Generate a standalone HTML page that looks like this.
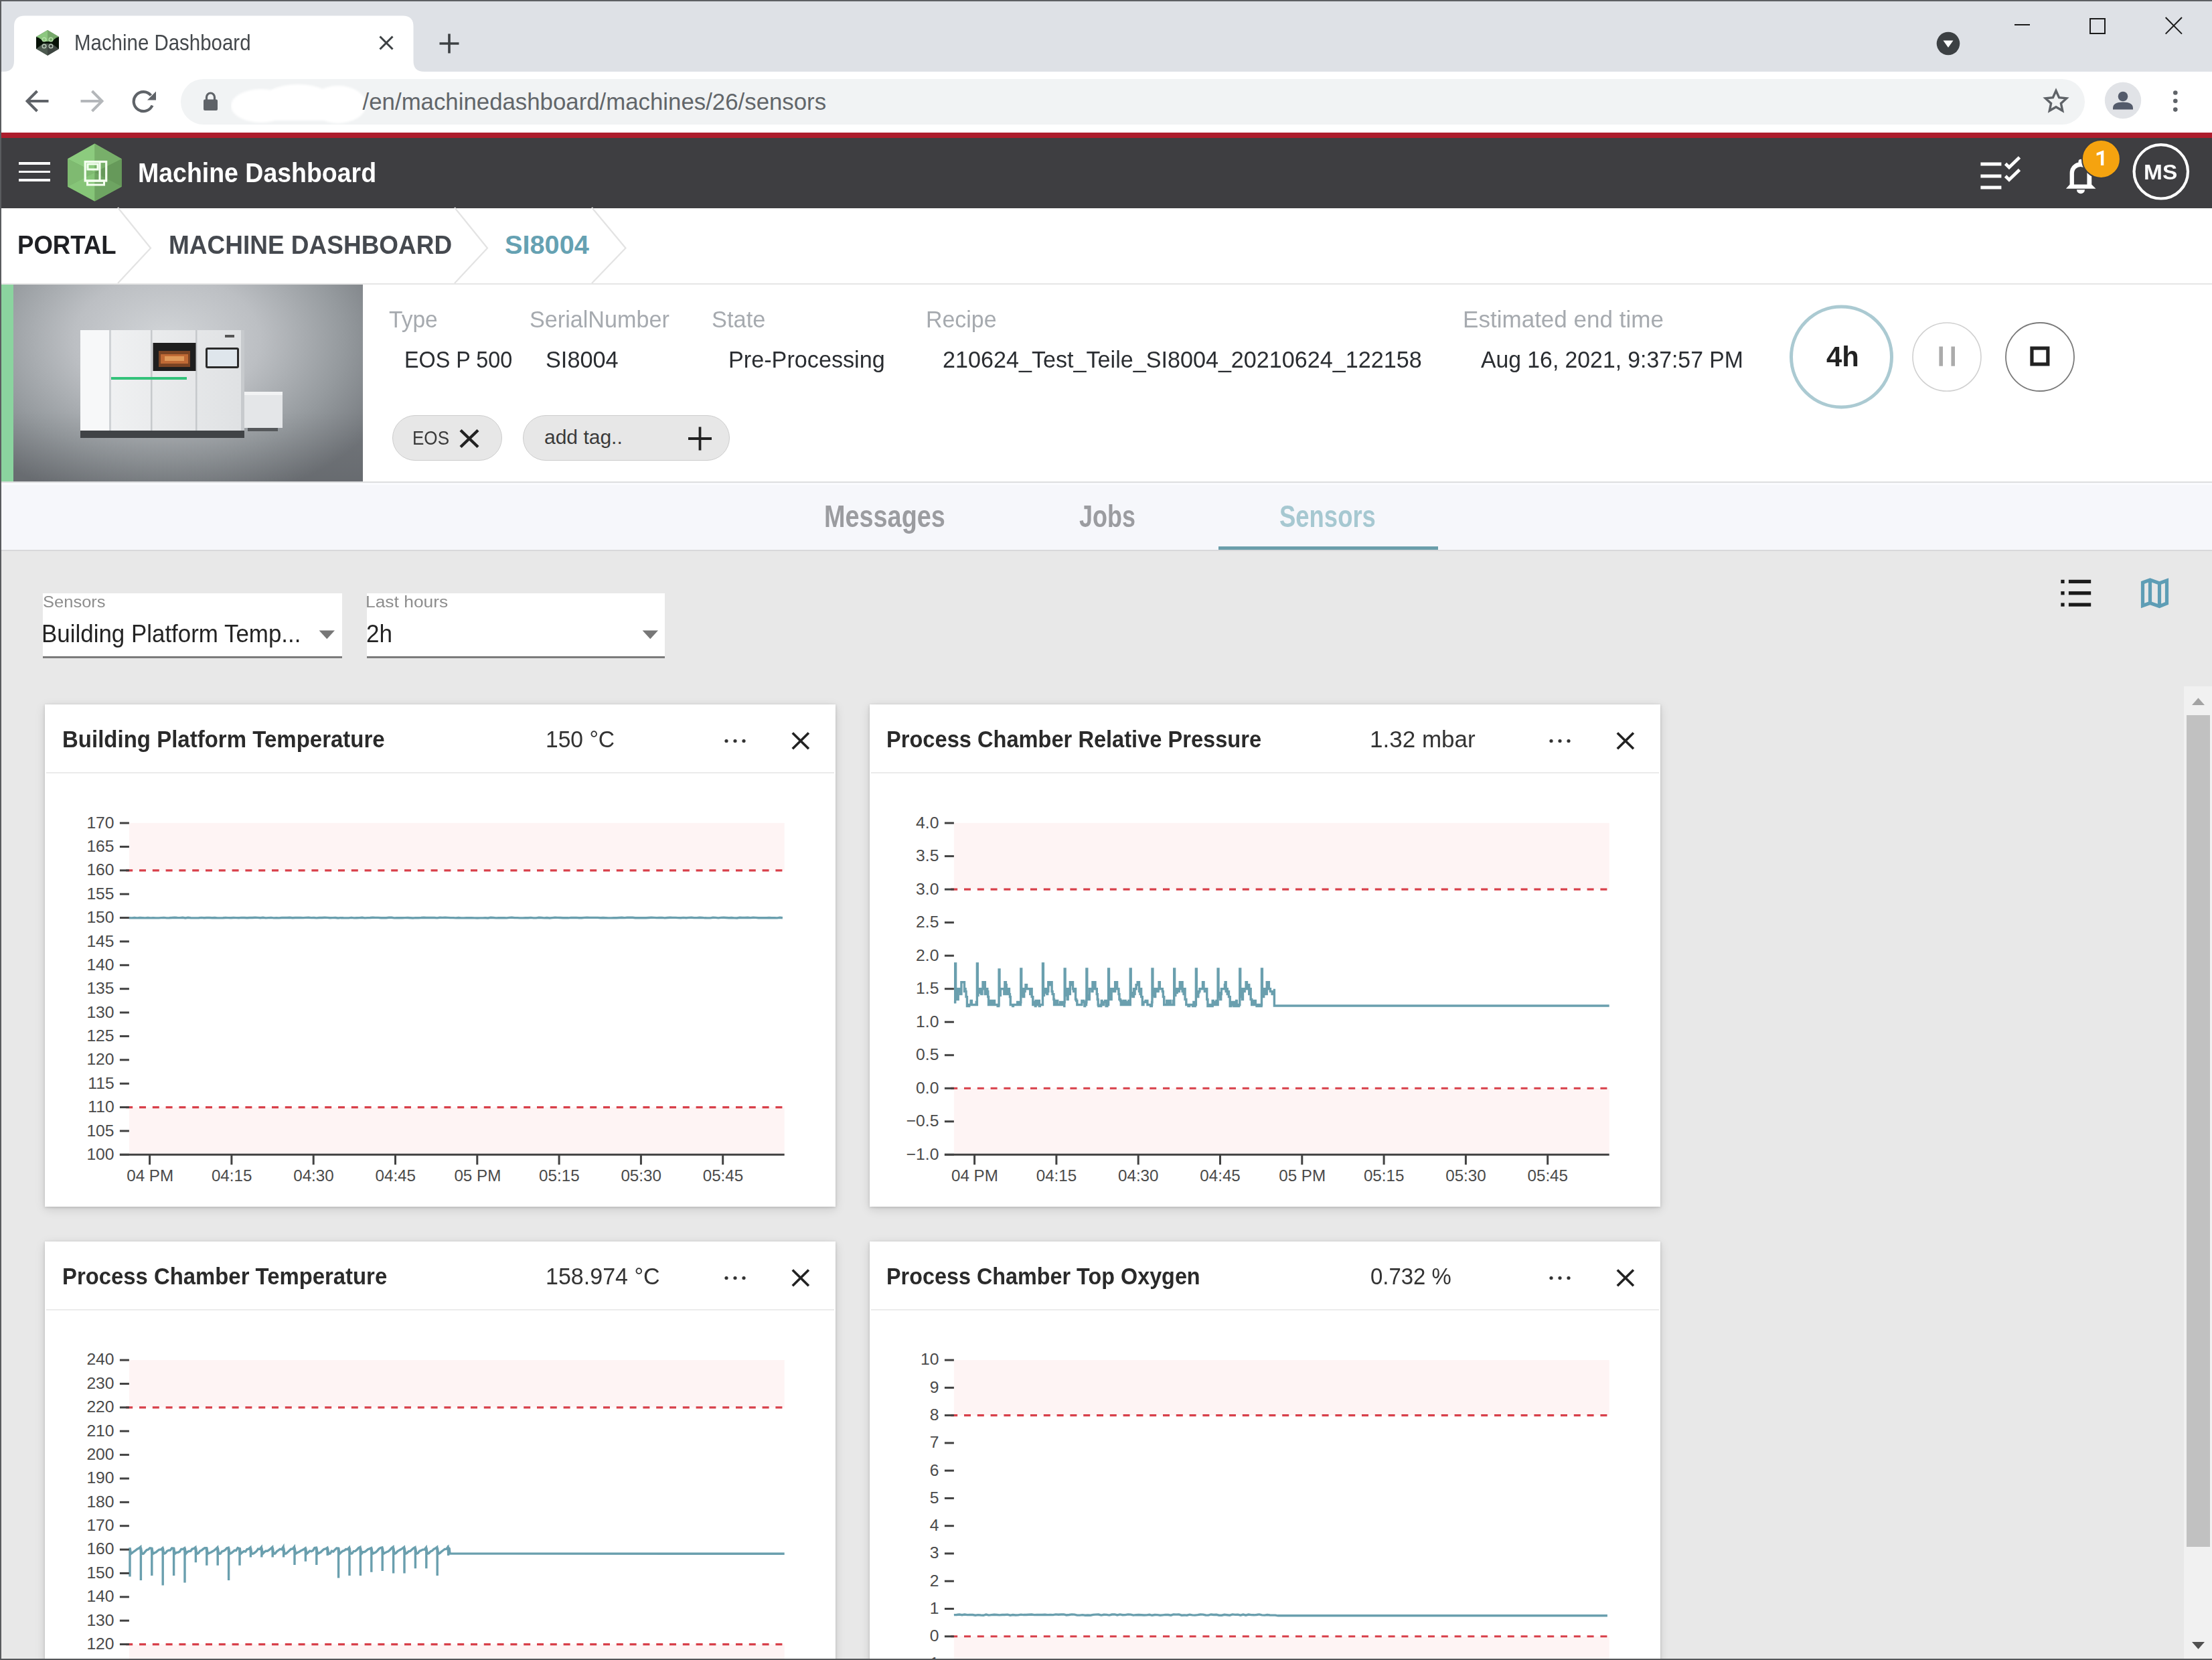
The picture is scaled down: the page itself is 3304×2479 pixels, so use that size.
<!DOCTYPE html><html><head><meta charset="utf-8"><title>Machine Dashboard</title><style>html,body{margin:0;padding:0;width:3304px;height:2479px;overflow:hidden;background:#e8e8e8;font-family:"Liberation Sans",sans-serif}</style></head><body><div style="position:absolute;left:0.0px;top:0.0px;width:3304.0px;height:2479.0px;background:#e8e8e8"></div>
<div style="position:absolute;left:0.0px;top:0.0px;width:3304.0px;height:107.0px;background:#dee1e6"></div>
<div style="position:absolute;left:0.0px;top:0.0px;width:3304.0px;height:2.0px;background:#5d5f63"></div>
<svg style="position:absolute;left:0.0px;top:0.0px;" width="660.0" height="107.0" viewBox="0 0 660 107"><path d="M5 107 Q21 107 21 91 L21 39.5 Q21 23.5 37 23.5 L601.5 23.5 Q617.5 23.5 617.5 39.5 L617.5 91 Q617.5 107 633.5 107 Z" fill="#ffffff"/></svg>
<svg style="position:absolute;left:53.0px;top:44.0px;" width="36.0" height="40.0" viewBox="0 0 36 40">
<polygon points="18,1 35,11 35,29 18,39 1,29 1,11" fill="#4d5a4f"/>
<polygon points="18,1 35,11 35,20 1,20 1,11" fill="#8cc77f"/>
<polygon points="18,1 18,20 35,20 35,11" fill="#77a86b"/>
<polygon points="18,39 35,29 35,20 18,20" fill="#3d4540"/>
<path d="M1 11 Q8 13 13 20 L1 29 Z" fill="#071207"/>
<path d="M35 11 Q28 13 23 20 L35 29 Z" fill="#071207"/>
<rect x="9" y="18" width="18" height="3" fill="#0a160a"/>
<circle cx="13" cy="15" r="2.8" fill="none" stroke="#b5e0a8" stroke-width="1.4"/>
<circle cx="23" cy="15" r="2.8" fill="none" stroke="#b5e0a8" stroke-width="1.4"/>
<circle cx="13" cy="25" r="2.8" fill="none" stroke="#b8c8b8" stroke-width="1.4"/>
<circle cx="23" cy="25" r="2.8" fill="none" stroke="#b8c8b8" stroke-width="1.4"/>
</svg>
<div style="position:absolute;left:110.5px;top:47.1px;font:400 33px/33px 'Liberation Sans', sans-serif;color:#44484c;white-space:nowrap;transform:scaleX(0.8922);transform-origin:0 0;">Machine Dashboard</div>
<svg style="position:absolute;left:565.0px;top:52.0px;" width="24.0" height="24.0" viewBox="0 0 24 24"><path d="M2.5 2.5 L21.5 21.5 M21.5 2.5 L2.5 21.5" stroke="#3c4043" stroke-width="3"/></svg>
<svg style="position:absolute;left:655.0px;top:49.0px;" width="32.0" height="32.0" viewBox="0 0 32 32"><path d="M16 1.5 V30.5 M1.5 16 H30.5" stroke="#3c4043" stroke-width="3.6"/></svg>
<svg style="position:absolute;left:2892.0px;top:47.0px;" width="36.0" height="36.0" viewBox="0 0 36 36"><circle cx="18" cy="18" r="17.3" fill="#3c4043"/><path d="M10.5 13.5 H25.5 L18 24 Z" fill="#fff"/></svg>
<div style="position:absolute;left:3008.5px;top:35.5px;width:23.5px;height:2.0px;background:#1b1b1b"></div>
<div style="position:absolute;left:3120.8px;top:27.0px;width:24.2px;height:23.6px;border:2.2px solid #1b1b1b;box-sizing:border-box"></div>
<svg style="position:absolute;left:3233.0px;top:25.0px;" width="28.0" height="28.0" viewBox="0 0 28 28"><path d="M1.7 1 L26 25.6 M26 1 L1.7 25.6" stroke="#1b1b1b" stroke-width="2"/></svg>
<div style="position:absolute;left:0.0px;top:107.0px;width:3304.0px;height:91.0px;background:#ffffff"></div>
<svg style="position:absolute;left:38.0px;top:133.0px;" width="38.0" height="36.0" viewBox="0 0 38 36"><path d="M2.5 18 H34.5 M17.5 3 L2.5 18 L17.5 33" fill="none" stroke="#5f6368" stroke-width="4"/></svg>
<svg style="position:absolute;left:117.0px;top:133.0px;" width="38.0" height="36.0" viewBox="0 0 38 36"><path d="M35.5 18 H3.5 M20.5 3 L35.5 18 L20.5 33" fill="none" stroke="#b4b7ba" stroke-width="4"/></svg>
<svg style="position:absolute;left:197.0px;top:133.0px;" width="40.0" height="38.0" viewBox="0 0 40 38"><path d="M30.5 24.5 A14.5 14.5 0 1 1 28.5 9.5" fill="none" stroke="#5f6368" stroke-width="4.2"/><path d="M36 3.5 V16.5 H23 Z" fill="#5f6368"/></svg>
<div style="position:absolute;left:270.0px;top:117.5px;width:2844.4px;height:68.5px;background:#f1f3f4;border-radius:34.25px"></div>
<svg style="position:absolute;left:302.0px;top:136.0px;" width="25.0" height="31.0" viewBox="0 0 25 31"><path d="M6.5 13 V9 A6 6 0 0 1 18.5 9 V13" fill="none" stroke="#5f6368" stroke-width="3.2"/><rect x="2" y="12.5" width="21" height="16.5" rx="2" fill="#5f6368"/></svg>
<svg style="position:absolute;left:345.0px;top:120.0px;" width="205.0" height="68.0" viewBox="0 0 205 68"><g fill="#ffffff" filter="url(#bl)"><ellipse cx="45" cy="38" rx="45" ry="25"/><ellipse cx="100" cy="32" rx="55" ry="26"/><ellipse cx="160" cy="36" rx="42" ry="28"/><rect x="20" y="20" width="160" height="40" rx="18"/></g><defs><filter id="bl"><feGaussianBlur stdDeviation="1.5"/></filter></defs></svg>
<div style="position:absolute;left:541.6px;top:135.0px;font:400 34.8px/34.8px 'Liberation Sans', sans-serif;color:#62666a;white-space:nowrap;">/en/machinedashboard/machines/26/sensors</div>
<svg style="position:absolute;left:3051.0px;top:131.0px;" width="40.0" height="40.0" viewBox="0 0 40 40"><path d="M20 4.5 L24.6 14.7 L35.7 15.9 L27.4 23.4 L29.7 34.3 L20 28.8 L10.3 34.3 L12.6 23.4 L4.3 15.9 L15.4 14.7 Z" fill="none" stroke="#5f6368" stroke-width="3.4" stroke-linejoin="miter"/></svg>
<svg style="position:absolute;left:3143.0px;top:122.0px;" width="56.0" height="56.0" viewBox="0 0 56 56"><circle cx="28" cy="28" r="27.2" fill="#e1e3e7"/><circle cx="28" cy="22" r="7.3" fill="#545b6b"/><path d="M13 39.5 Q13 30.5 28 30.5 Q43 30.5 43 39.5 V41.5 H13 Z" fill="#545b6b"/></svg>
<svg style="position:absolute;left:3243.0px;top:132.0px;" width="13.0" height="38.0" viewBox="0 0 13 38"><circle cx="6.3" cy="6.5" r="3.3" fill="#5f6368"/><circle cx="6.3" cy="18.8" r="3.3" fill="#5f6368"/><circle cx="6.3" cy="31.6" r="3.3" fill="#5f6368"/></svg>
<div style="position:absolute;left:0.0px;top:197.5px;width:3304.0px;height:8.0px;background:#ad1c2c"></div>
<div style="position:absolute;left:0.0px;top:205.5px;width:3304.0px;height:105.3px;background:#3e3e41"></div>
<div style="position:absolute;left:28.0px;top:242.2px;width:46.6px;height:3.6px;background:#ffffff"></div>
<div style="position:absolute;left:28.0px;top:254.7px;width:46.6px;height:3.6px;background:#ffffff"></div>
<div style="position:absolute;left:28.0px;top:267.2px;width:46.6px;height:3.6px;background:#ffffff"></div>
<svg style="position:absolute;left:99.0px;top:213.0px;" width="85.0" height="90.0" viewBox="0 0 85 90">
<polygon points="42.5,1.5 82.7,24.3 82.7,65.7 42.5,87.5 2,65.7 2,24.3" fill="#72ab64"/>
<polygon points="42.5,1.5 2,24.3 42.5,44.5" fill="#8ccb7e"/>
<polygon points="42.5,1.5 82.7,24.3 42.5,44.5" fill="#78af6a"/>
<polygon points="2,24.3 2,65.7 42.5,44.5" fill="#7fba71"/>
<polygon points="82.7,24.3 82.7,65.7 42.5,44.5" fill="#66995a"/>
<polygon points="2,65.7 42.5,87.5 42.5,44.5" fill="#86c578"/>
<polygon points="82.7,65.7 42.5,87.5 42.5,44.5" fill="#6ea462"/>
<rect x="28.2" y="28.5" width="31.5" height="28.5" fill="none" stroke="#f4fff0" stroke-width="3.2"/>
<rect x="32" y="32" width="15" height="8" fill="none" stroke="#f4fff0" stroke-width="3"/>
<line x1="50" y1="28.5" x2="50" y2="57" stroke="#f4fff0" stroke-width="3"/>
<rect x="31.5" y="57" width="25" height="6" fill="none" stroke="#f4fff0" stroke-width="3"/>
</svg>
<div style="position:absolute;left:205.7px;top:237.5px;font:700 40.7px/40.7px 'Liberation Sans', sans-serif;color:#ffffff;white-space:nowrap;transform:scaleX(0.9209);transform-origin:0 0;">Machine Dashboard</div>
<svg style="position:absolute;left:2955.0px;top:230.0px;" width="66.0" height="56.0" viewBox="0 0 66 56">
<rect x="3.4" y="12.5" width="31" height="5" fill="#fff"/>
<rect x="3.4" y="30.5" width="31" height="5" fill="#fff"/>
<rect x="3.4" y="47.5" width="31" height="5" fill="#fff"/>
<path d="M40.5 14.5 L46 20 L61.5 5" fill="none" stroke="#fff" stroke-width="4.8"/>
<path d="M40.5 33 L46 38.5 L61.5 23.5" fill="none" stroke="#fff" stroke-width="4.8"/>
</svg>
<svg style="position:absolute;left:3083.0px;top:232.0px;" width="52.0" height="62.0" viewBox="0 0 52 62">
<path fill-rule="evenodd" fill="#fff" d="M2.9 49.7 L8.6 43.4 V26.3 A16.3 16.3 0 0 1 21.5 10.4 V9.3 A3.5 3.5 0 0 1 28.5 9.3 V10.4 A16.3 16.3 0 0 1 41.2 26.3 V43.4 L47.5 49.7 Z M14.9 43.4 V26.7 A9.75 9.75 0 0 1 34.4 26.7 V43.4 Z"/>
<path d="M19 51.2 A6 6 0 0 0 31 51.2 Z" fill="#fff"/>
</svg>
<svg style="position:absolute;left:3108.0px;top:207.0px;" width="62.0" height="62.0" viewBox="0 0 62 62"><circle cx="30.4" cy="30.4" r="28.5" fill="#f5a30f" stroke="#3c3d40" stroke-width="2"/></svg>
<svg style="position:absolute;left:3128.0px;top:222.0px;" width="20.0" height="26.0" viewBox="0 0 20 26"><path d="M14.3 2.7 V25.1 H9.9 V8.4 L3.6 10.4 V6.6 L13.3 2.7 Z" fill="#ffffff"/></svg>
<svg style="position:absolute;left:3183.0px;top:212.0px;" width="90.0" height="90.0" viewBox="0 0 90 90"><circle cx="44.8" cy="44.3" r="40.2" fill="none" stroke="#fff" stroke-width="4.2"/></svg>
<div style="position:absolute;left:3202.2px;top:242.3px;font:700 31.5px/31.5px 'Liberation Sans', sans-serif;color:#ffffff;white-space:nowrap;transform:scaleX(1.0624);transform-origin:0 0;">MS</div>
<div style="position:absolute;left:0.0px;top:310.8px;width:3304.0px;height:113.2px;background:#ffffff"></div>
<div style="position:absolute;left:0.0px;top:423.0px;width:3304.0px;height:1.5px;background:#e6e6e6"></div>
<div style="position:absolute;left:26.2px;top:346.4px;font:700 39.7px/39.7px 'Liberation Sans', sans-serif;color:#1f2024;white-space:nowrap;transform:scaleX(0.9218);transform-origin:0 0;">PORTAL</div>
<svg style="position:absolute;left:174.0px;top:309.0px;" width="55.0" height="116.0" viewBox="0 0 55 116"><path d="M2 1 L51 61.5 L2 114" fill="none" stroke="#e3e3e3" stroke-width="2.2"/></svg>
<svg style="position:absolute;left:677.0px;top:309.0px;" width="55.0" height="116.0" viewBox="0 0 55 116"><path d="M2 1 L51 61.5 L2 114" fill="none" stroke="#e3e3e3" stroke-width="2.2"/></svg>
<svg style="position:absolute;left:881.5px;top:309.0px;" width="56.5" height="116.0" viewBox="0 0 56.5 116"><path d="M2 1 L52.5 61.5 L2 114" fill="none" stroke="#e3e3e3" stroke-width="2.2"/></svg>
<div style="position:absolute;left:252.1px;top:346.0px;font:700 39.7px/39.7px 'Liberation Sans', sans-serif;color:#45494f;white-space:nowrap;transform:scaleX(0.9318);transform-origin:0 0;">MACHINE DASHBOARD</div>
<div style="position:absolute;left:754.0px;top:346.0px;font:700 39.7px/39.7px 'Liberation Sans', sans-serif;color:#65a1b2;white-space:nowrap;">SI8004</div>
<div style="position:absolute;left:0.0px;top:424.5px;width:3304.0px;height:294.5px;background:#ffffff"></div>
<div style="position:absolute;left:0.0px;top:719.0px;width:3304.0px;height:1.8px;background:#dedfe0"></div>
<div style="position:absolute;left:2.0px;top:425.0px;width:17.5px;height:293.5px;background:#8bd49f"></div>
<div style="position:absolute;left:19.5px;top:425px;width:522.5px;height:293.5px;overflow:hidden;
background:radial-gradient(ellipse 70% 85% at 44% 28%, #d2d5d8 0%, #bcbfc3 38%, #959a9e 72%, #73777c 100%);"></div>
<svg style="position:absolute;left:19.5px;top:425.0px;" width="522.5" height="293.5" viewBox="0 0 522.5 293.5">
<defs>
<linearGradient id="fl" x1="0" y1="0" x2="0" y2="1"><stop offset="0" stop-color="#000" stop-opacity="0"/><stop offset="1" stop-color="#000" stop-opacity="0.10"/></linearGradient>
<linearGradient id="wh" x1="0" y1="0" x2="1" y2="0"><stop offset="0" stop-color="#f3f4f5"/><stop offset="1" stop-color="#dfe1e3"/></linearGradient>
</defs>
<rect x="0" y="190" width="522.5" height="103.5" fill="url(#fl)"/>

<rect x="100" y="68" width="245" height="151" fill="url(#wh)"/>
<rect x="100" y="68" width="45" height="151" fill="#f7f8f9"/>
<rect x="143" y="68" width="3" height="151" fill="#cfd2d5"/>
<rect x="205" y="68" width="2.5" height="151" fill="#c6c9cc"/>
<rect x="272" y="68" width="2.5" height="151" fill="#c6c9cc"/>
<rect x="340" y="68" width="5" height="151" fill="#c7cacd"/>
<rect x="208.5" y="87" width="64" height="42" fill="#1e1e1e"/>
<rect x="217" y="99" width="47" height="24" fill="#7a4424"/>
<rect x="220" y="104" width="41" height="14" fill="#c06a35"/>
<rect x="226" y="107" width="29" height="7" fill="#e09a5a"/>
<rect x="287" y="94" width="50" height="31" rx="3" fill="#2a2a2a"/>
<rect x="290" y="97" width="44" height="25" fill="#dfe6ec"/>
<rect x="146" y="138" width="113" height="4" fill="#33c27a"/>
<rect x="100" y="218" width="245" height="11" fill="#404346"/>
<rect x="345" y="160" width="57" height="54" fill="#e4e6e8"/>
<rect x="345" y="160" width="57" height="5" fill="#f2f3f4"/>
<rect x="350" y="214" width="45" height="5" fill="#55585b"/>
<rect x="316" y="75" width="14" height="4" fill="#555"/>
</svg>
<div style="position:absolute;left:580.8px;top:460.4px;font:400 35.6px/35.6px 'Liberation Sans', sans-serif;color:#a6aaaf;white-space:nowrap;transform:scaleX(0.9431);transform-origin:0 0;">Type</div>
<div style="position:absolute;left:791.0px;top:460.4px;font:400 35.6px/35.6px 'Liberation Sans', sans-serif;color:#a6aaaf;white-space:nowrap;transform:scaleX(0.9601);transform-origin:0 0;">SerialNumber</div>
<div style="position:absolute;left:1063.0px;top:460.4px;font:400 35.6px/35.6px 'Liberation Sans', sans-serif;color:#a6aaaf;white-space:nowrap;transform:scaleX(0.9669);transform-origin:0 0;">State</div>
<div style="position:absolute;left:1382.7px;top:460.4px;font:400 35.6px/35.6px 'Liberation Sans', sans-serif;color:#a6aaaf;white-space:nowrap;transform:scaleX(0.9531);transform-origin:0 0;">Recipe</div>
<div style="position:absolute;left:2184.5px;top:460.4px;font:400 35.6px/35.6px 'Liberation Sans', sans-serif;color:#a6aaaf;white-space:nowrap;transform:scaleX(0.9853);transform-origin:0 0;">Estimated end time</div>
<div style="position:absolute;left:603.5px;top:520.1px;font:400 35.5px/35.5px 'Liberation Sans', sans-serif;color:#2a2d31;white-space:nowrap;transform:scaleX(0.9116);transform-origin:0 0;">EOS P 500</div>
<div style="position:absolute;left:815.0px;top:520.1px;font:400 35.5px/35.5px 'Liberation Sans', sans-serif;color:#2a2d31;white-space:nowrap;transform:scaleX(0.9660);transform-origin:0 0;">SI8004</div>
<div style="position:absolute;left:1087.5px;top:520.1px;font:400 35.5px/35.5px 'Liberation Sans', sans-serif;color:#2a2d31;white-space:nowrap;transform:scaleX(0.9630);transform-origin:0 0;">Pre-Processing</div>
<div style="position:absolute;left:1408.0px;top:520.1px;font:400 35.5px/35.5px 'Liberation Sans', sans-serif;color:#2a2d31;white-space:nowrap;transform:scaleX(0.9616);transform-origin:0 0;">210624_Test_Teile_SI8004_20210624_122158</div>
<div style="position:absolute;left:2211.6px;top:520.1px;font:400 35.5px/35.5px 'Liberation Sans', sans-serif;color:#2a2d31;white-space:nowrap;transform:scaleX(0.9499);transform-origin:0 0;">Aug 16, 2021, 9:37:57 PM</div>
<div style="position:absolute;left:585.5px;top:620.0px;width:164.5px;height:68.0px;background:#e7e7e7;border:1.5px solid #cdcdcd;border-radius:34px;box-sizing:border-box"></div>
<div style="position:absolute;left:616.1px;top:638.6px;font:400 30px/30px 'Liberation Sans', sans-serif;color:#3a3a3a;white-space:nowrap;transform:scaleX(0.8683);transform-origin:0 0;">EOS</div>
<svg style="position:absolute;left:685.0px;top:640.0px;" width="32.0" height="30.0" viewBox="0 0 32 30"><path d="M3 2.5 L29 27.5 M29 2.5 L3 27.5" stroke="#222" stroke-width="4.4"/></svg>
<div style="position:absolute;left:781.0px;top:620.0px;width:309.0px;height:68.0px;background:#e7e7e7;border:1.5px solid #cdcdcd;border-radius:34px;box-sizing:border-box"></div>
<div style="position:absolute;left:813.0px;top:637.6px;font:400 30px/30px 'Liberation Sans', sans-serif;color:#3a3a3a;white-space:nowrap;">add tag..</div>
<svg style="position:absolute;left:1026.0px;top:636.0px;" width="39.0" height="38.0" viewBox="0 0 39 38"><path d="M19.5 1.5 V36.5 M2 19 H37" stroke="#222" stroke-width="3.8"/></svg>
<svg style="position:absolute;left:2670.0px;top:453.0px;" width="162.0" height="162.0" viewBox="0 0 162 162"><circle cx="80.5" cy="80" r="75" fill="none" stroke="#abcad2" stroke-width="5"/></svg>
<div style="position:absolute;left:2727.5px;top:512.1px;font:700 42.2px/42.2px 'Liberation Sans', sans-serif;color:#222;white-space:nowrap;transform:scaleX(0.9903);transform-origin:0 0;">4h</div>
<svg style="position:absolute;left:2854.0px;top:479.0px;" width="108.0" height="108.0" viewBox="0 0 108 108"><circle cx="54" cy="54" r="51" fill="none" stroke="#d0d0d0" stroke-width="1.6"/><rect x="42.4" y="38.5" width="5.6" height="29.2" fill="#ababab"/><rect x="60.4" y="38.5" width="5.6" height="29.2" fill="#ababab"/></svg>
<svg style="position:absolute;left:2993.0px;top:479.0px;" width="108.0" height="108.0" viewBox="0 0 108 108"><circle cx="54" cy="54" r="51" fill="none" stroke="#7a7a7a" stroke-width="1.8"/><rect x="41.95" y="41" width="23.9" height="23.9" fill="none" stroke="#222" stroke-width="5.2"/></svg>
<div style="position:absolute;left:0.0px;top:720.5px;width:3304.0px;height:101.0px;background:#f6f7fb"></div>
<div style="position:absolute;left:0.0px;top:721.8px;width:3304.0px;height:2.4px;background:#fbfcfe"></div>
<div style="position:absolute;left:0.0px;top:821.0px;width:3304.0px;height:1.8px;background:#d8d8da"></div>
<div style="position:absolute;left:1231.1px;top:747.2px;font:700 47px/47px 'Liberation Sans', sans-serif;color:#9b9ca0;white-space:nowrap;transform:scaleX(0.8048);transform-origin:0 0;">Messages</div>
<div style="position:absolute;left:1611.5px;top:747.2px;font:700 47px/47px 'Liberation Sans', sans-serif;color:#9b9ca0;white-space:nowrap;transform:scaleX(0.7646);transform-origin:0 0;">Jobs</div>
<div style="position:absolute;left:1911.0px;top:747.2px;font:700 47px/47px 'Liberation Sans', sans-serif;color:#a6c8d1;white-space:nowrap;transform:scaleX(0.7756);transform-origin:0 0;">Sensors</div>
<div style="position:absolute;left:1819.8px;top:816.0px;width:328.7px;height:5.2px;background:#6b9eab"></div>
<div style="position:absolute;left:64.0px;top:886.2px;width:446.6px;height:94.0px;background:#ffffff"></div>
<div style="position:absolute;left:64.0px;top:979.8px;width:446.6px;height:3.6px;background:#7b7b7b"></div>
<div style="position:absolute;left:64.3px;top:886.6px;font:400 24.7px/24.7px 'Liberation Sans', sans-serif;color:#8d8d8d;white-space:nowrap;transform:scaleX(1.0334);transform-origin:0 0;">Sensors</div>
<div style="position:absolute;left:62.2px;top:928.4px;font:400 37.8px/37.8px 'Liberation Sans', sans-serif;color:#232323;white-space:nowrap;transform:scaleX(0.9237);transform-origin:0 0;">Building Platform Temp...</div>
<svg style="position:absolute;left:476.0px;top:941.0px;" width="25.0" height="14.0" viewBox="0 0 25 14"><path d="M0.6 0.5 H24 L12.3 13.2 Z" fill="#777"/></svg>
<div style="position:absolute;left:547.6px;top:886.2px;width:445.4px;height:94.0px;background:#ffffff"></div>
<div style="position:absolute;left:547.6px;top:979.8px;width:445.4px;height:3.6px;background:#7b7b7b"></div>
<div style="position:absolute;left:545.5px;top:886.6px;font:400 24.7px/24.7px 'Liberation Sans', sans-serif;color:#8d8d8d;white-space:nowrap;transform:scaleX(1.0688);transform-origin:0 0;">Last hours</div>
<div style="position:absolute;left:546.7px;top:928.4px;font:400 37.8px/37.8px 'Liberation Sans', sans-serif;color:#232323;white-space:nowrap;transform:scaleX(0.9277);transform-origin:0 0;">2h</div>
<svg style="position:absolute;left:958.5px;top:941.0px;" width="25.0" height="14.0" viewBox="0 0 25 14"><path d="M0.6 0.5 H24 L12.3 13.2 Z" fill="#777"/></svg>
<svg style="position:absolute;left:3074.0px;top:860.0px;" width="54.0" height="50.0" viewBox="0 0 54 50">
<rect x="4.3" y="5.8" width="5.3" height="5.3" fill="#1a1a1a"/><rect x="15.9" y="5.8" width="33.3" height="5.3" fill="#1a1a1a"/>
<rect x="4.3" y="23.1" width="5.3" height="5.3" fill="#1a1a1a"/><rect x="15.9" y="23.1" width="33.3" height="5.3" fill="#1a1a1a"/>
<rect x="4.3" y="40.4" width="5.3" height="5.3" fill="#1a1a1a"/><rect x="15.9" y="40.4" width="33.3" height="5.3" fill="#1a1a1a"/>
</svg>
<svg style="position:absolute;left:3194.0px;top:858.0px;" width="50.0" height="54.0" viewBox="0 0 50 54">
<path d="M6.5 12 L17.5 8 L31.5 13 L42.5 9 V43 L31.5 47.5 L17.5 42.5 L6.5 46.5 Z M17.5 8 V42.5 M31.5 13 V47.5" fill="none" stroke="#5e9db5" stroke-width="5.2" stroke-linejoin="miter"/>
</svg>
<div style="position:absolute;left:67.0px;top:1052.3px;width:1181.0px;height:750.0px;background:#ffffff;box-shadow:0 1px 4px rgba(0,0,0,0.16),0 4px 14px rgba(0,0,0,0.13)"></div>
<div style="position:absolute;left:69.0px;top:1153.3px;width:1177.0px;height:1.6px;background:#ebebeb"></div>
<div style="position:absolute;left:92.5px;top:1086.9px;font:700 35.5px/35.5px 'Liberation Sans', sans-serif;color:#2a2a2a;white-space:nowrap;transform:scaleX(0.9298);transform-origin:0 0;">Building Platform Temperature</div>
<div style="position:absolute;left:814.5px;top:1086.9px;font:400 35.5px/35.5px 'Liberation Sans', sans-serif;color:#333333;white-space:nowrap;transform:scaleX(0.9465);transform-origin:0 0;">150 °C</div>
<svg style="position:absolute;left:1079.0px;top:1099.3px;" width="38.0" height="15.0" viewBox="0 0 38 15"><circle cx="6" cy="7.5" r="2.6" fill="#333"/><circle cx="19" cy="7.5" r="2.6" fill="#333"/><circle cx="32" cy="7.5" r="2.6" fill="#333"/></svg>
<svg style="position:absolute;left:1179.0px;top:1090.8px;" width="34.0" height="32.0" viewBox="0 0 34 32"><path d="M4.8 3.5 L28.9 27.2 M28.9 3.5 L4.8 27.2" stroke="#222" stroke-width="3.7"/></svg>
<div style="position:absolute;left:129.4px;top:1711.9px;font:400 24.7px/24.7px 'Liberation Sans', sans-serif;color:#4a4a4a;white-space:nowrap;">100</div>
<div style="position:absolute;left:129.4px;top:1676.5px;font:400 24.7px/24.7px 'Liberation Sans', sans-serif;color:#4a4a4a;white-space:nowrap;">105</div>
<div style="position:absolute;left:131.3px;top:1641.1px;font:400 24.7px/24.7px 'Liberation Sans', sans-serif;color:#4a4a4a;white-space:nowrap;">110</div>
<div style="position:absolute;left:131.3px;top:1605.8px;font:400 24.7px/24.7px 'Liberation Sans', sans-serif;color:#4a4a4a;white-space:nowrap;">115</div>
<div style="position:absolute;left:129.4px;top:1570.4px;font:400 24.7px/24.7px 'Liberation Sans', sans-serif;color:#4a4a4a;white-space:nowrap;">120</div>
<div style="position:absolute;left:129.4px;top:1535.0px;font:400 24.7px/24.7px 'Liberation Sans', sans-serif;color:#4a4a4a;white-space:nowrap;">125</div>
<div style="position:absolute;left:129.4px;top:1499.7px;font:400 24.7px/24.7px 'Liberation Sans', sans-serif;color:#4a4a4a;white-space:nowrap;">130</div>
<div style="position:absolute;left:129.4px;top:1464.3px;font:400 24.7px/24.7px 'Liberation Sans', sans-serif;color:#4a4a4a;white-space:nowrap;">135</div>
<div style="position:absolute;left:129.4px;top:1428.9px;font:400 24.7px/24.7px 'Liberation Sans', sans-serif;color:#4a4a4a;white-space:nowrap;">140</div>
<div style="position:absolute;left:129.4px;top:1393.5px;font:400 24.7px/24.7px 'Liberation Sans', sans-serif;color:#4a4a4a;white-space:nowrap;">145</div>
<div style="position:absolute;left:129.4px;top:1358.2px;font:400 24.7px/24.7px 'Liberation Sans', sans-serif;color:#4a4a4a;white-space:nowrap;">150</div>
<div style="position:absolute;left:129.4px;top:1322.8px;font:400 24.7px/24.7px 'Liberation Sans', sans-serif;color:#4a4a4a;white-space:nowrap;">155</div>
<div style="position:absolute;left:129.4px;top:1287.4px;font:400 24.7px/24.7px 'Liberation Sans', sans-serif;color:#4a4a4a;white-space:nowrap;">160</div>
<div style="position:absolute;left:129.4px;top:1252.1px;font:400 24.7px/24.7px 'Liberation Sans', sans-serif;color:#4a4a4a;white-space:nowrap;">165</div>
<div style="position:absolute;left:129.4px;top:1216.7px;font:400 24.7px/24.7px 'Liberation Sans', sans-serif;color:#4a4a4a;white-space:nowrap;">170</div>
<div style="position:absolute;left:189.2px;top:1744.3px;font:400 24.2px/24.2px 'Liberation Sans', sans-serif;color:#4a4a4a;white-space:nowrap;">04 PM</div>
<div style="position:absolute;left:315.9px;top:1744.3px;font:400 24.2px/24.2px 'Liberation Sans', sans-serif;color:#4a4a4a;white-space:nowrap;">04:15</div>
<div style="position:absolute;left:438.2px;top:1744.3px;font:400 24.2px/24.2px 'Liberation Sans', sans-serif;color:#4a4a4a;white-space:nowrap;">04:30</div>
<div style="position:absolute;left:560.5px;top:1744.3px;font:400 24.2px/24.2px 'Liberation Sans', sans-serif;color:#4a4a4a;white-space:nowrap;">04:45</div>
<div style="position:absolute;left:678.4px;top:1744.3px;font:400 24.2px/24.2px 'Liberation Sans', sans-serif;color:#4a4a4a;white-space:nowrap;">05 PM</div>
<div style="position:absolute;left:805.1px;top:1744.3px;font:400 24.2px/24.2px 'Liberation Sans', sans-serif;color:#4a4a4a;white-space:nowrap;">05:15</div>
<div style="position:absolute;left:927.4px;top:1744.3px;font:400 24.2px/24.2px 'Liberation Sans', sans-serif;color:#4a4a4a;white-space:nowrap;">05:30</div>
<div style="position:absolute;left:1049.7px;top:1744.3px;font:400 24.2px/24.2px 'Liberation Sans', sans-serif;color:#4a4a4a;white-space:nowrap;">05:45</div>
<svg style="position:absolute;left:67.0px;top:1052.3px;overflow:visible" width="1181.0" height="750.0" viewBox="0 0 1181 750"><rect x="125.9" y="177.10" width="978.80" height="70.74" fill="#fef4f4"/><rect x="125.9" y="601.56" width="978.80" height="70.74" fill="#fef4f4"/><line x1="121.2" y1="247.84" x2="1104.7" y2="247.84" stroke="#d8404a" stroke-width="3.2" stroke-dasharray="10 9.8"/><line x1="121.2" y1="601.56" x2="1104.7" y2="601.56" stroke="#d8404a" stroke-width="3.2" stroke-dasharray="10 9.8"/><path d="M125.9 318.71 L129.9 318.83 L133.9 318.48 L137.9 318.89 L141.9 318.56 L145.9 318.68 L149.9 318.90 L153.9 318.58 L157.9 318.91 L161.9 318.63 L165.9 318.89 L169.9 318.88 L173.9 318.64 L177.9 318.35 L181.9 318.85 L185.9 318.78 L189.9 318.50 L193.9 318.27 L197.9 318.53 L201.9 318.66 L205.9 318.25 L209.9 318.91 L213.9 318.33 L217.9 318.73 L221.9 318.84 L225.9 318.86 L229.9 318.72 L233.9 318.36 L237.9 318.81 L241.9 318.53 L245.9 318.49 L249.9 318.68 L253.9 318.55 L257.9 318.90 L261.9 318.90 L265.9 318.79 L269.9 318.46 L273.9 318.64 L277.9 318.72 L281.9 318.53 L285.9 318.62 L289.9 318.73 L293.9 318.38 L297.9 318.44 L301.9 318.77 L305.9 318.53 L309.9 318.57 L313.9 318.32 L317.9 318.42 L321.9 318.74 L325.9 318.25 L329.9 318.86 L333.9 318.64 L337.9 318.40 L341.9 318.83 L345.9 318.59 L349.9 318.91 L353.9 318.47 L357.9 318.40 L361.9 318.53 L365.9 318.32 L369.9 318.72 L373.9 318.45 L377.9 318.52 L381.9 318.53 L385.9 318.62 L389.9 318.35 L393.9 318.27 L397.9 318.60 L401.9 318.47 L405.9 318.90 L409.9 318.44 L413.9 318.48 L417.9 318.24 L421.9 318.36 L425.9 318.74 L429.9 318.67 L433.9 318.47 L437.9 318.92 L441.9 318.61 L445.9 318.82 L449.9 318.86 L453.9 318.90 L457.9 318.40 L461.9 318.85 L465.9 318.76 L469.9 318.66 L473.9 318.32 L477.9 318.88 L481.9 318.62 L485.9 318.55 L489.9 318.31 L493.9 318.36 L497.9 318.33 L501.9 318.74 L505.9 318.65 L509.9 318.69 L513.9 318.31 L517.9 318.26 L521.9 318.83 L525.9 318.81 L529.9 318.78 L533.9 318.77 L537.9 318.60 L541.9 318.52 L545.9 318.75 L549.9 318.94 L553.9 318.64 L557.9 318.68 L561.9 318.54 L565.9 318.27 L569.9 318.45 L573.9 318.57 L577.9 318.50 L581.9 318.46 L585.9 318.90 L589.9 318.30 L593.9 318.39 L597.9 318.32 L601.9 318.37 L605.9 318.66 L609.9 318.66 L613.9 318.87 L617.9 318.49 L621.9 318.90 L625.9 318.89 L629.9 318.79 L633.9 318.82 L637.9 318.70 L641.9 318.90 L645.9 318.94 L649.9 318.83 L653.9 318.87 L657.9 318.68 L661.9 318.92 L665.9 318.32 L669.9 318.51 L673.9 318.83 L677.9 318.76 L681.9 318.69 L685.9 318.68 L689.9 318.85 L693.9 318.34 L697.9 318.24 L701.9 318.61 L705.9 318.60 L709.9 318.88 L713.9 318.87 L717.9 318.70 L721.9 318.75 L725.9 318.35 L729.9 318.83 L733.9 318.92 L737.9 318.27 L741.9 318.57 L745.9 318.84 L749.9 318.56 L753.9 318.92 L757.9 318.57 L761.9 318.25 L765.9 318.33 L769.9 318.45 L773.9 318.75 L777.9 318.68 L781.9 318.82 L785.9 318.39 L789.9 318.56 L793.9 318.39 L797.9 318.71 L801.9 318.78 L805.9 318.37 L809.9 318.24 L813.9 318.34 L817.9 318.37 L821.9 318.36 L825.9 318.42 L829.9 318.78 L833.9 318.57 L837.9 318.69 L841.9 318.92 L845.9 318.92 L849.9 318.74 L853.9 318.76 L857.9 318.45 L861.9 318.26 L865.9 318.62 L869.9 318.28 L873.9 318.24 L877.9 318.26 L881.9 318.68 L885.9 318.78 L889.9 318.78 L893.9 318.80 L897.9 318.79 L901.9 318.50 L905.9 318.30 L909.9 318.34 L913.9 318.60 L917.9 318.48 L921.9 318.37 L925.9 318.88 L929.9 318.47 L933.9 318.30 L937.9 318.39 L941.9 318.41 L945.9 318.60 L949.9 318.81 L953.9 318.38 L957.9 318.70 L961.9 318.37 L965.9 318.25 L969.9 318.66 L973.9 318.66 L977.9 318.27 L981.9 318.43 L985.9 318.82 L989.9 318.85 L993.9 318.83 L997.9 318.30 L1001.9 318.37 L1005.9 318.84 L1009.9 318.35 L1013.9 318.25 L1017.9 318.47 L1021.9 318.69 L1025.9 318.55 L1029.9 318.85 L1033.9 318.93 L1037.9 318.25 L1041.9 318.48 L1045.9 318.57 L1049.9 318.28 L1053.9 318.63 L1057.9 318.32 L1061.9 318.35 L1065.9 318.79 L1069.9 318.76 L1073.9 318.73 L1077.9 318.77 L1081.9 318.52 L1085.9 318.76 L1089.9 318.64 L1093.9 318.85 L1097.9 318.30 L1101.9 318.69" fill="none" stroke="#6a9fae" stroke-width="3.4" stroke-linejoin="miter"/><rect x="111.9" y="670.80" width="14" height="3" fill="#424242"/><rect x="111.9" y="635.43" width="14" height="3" fill="#424242"/><rect x="111.9" y="600.06" width="14" height="3" fill="#424242"/><rect x="111.9" y="564.69" width="14" height="3" fill="#424242"/><rect x="111.9" y="529.31" width="14" height="3" fill="#424242"/><rect x="111.9" y="493.94" width="14" height="3" fill="#424242"/><rect x="111.9" y="458.57" width="14" height="3" fill="#424242"/><rect x="111.9" y="423.20" width="14" height="3" fill="#424242"/><rect x="111.9" y="387.83" width="14" height="3" fill="#424242"/><rect x="111.9" y="352.46" width="14" height="3" fill="#424242"/><rect x="111.9" y="317.09" width="14" height="3" fill="#424242"/><rect x="111.9" y="281.71" width="14" height="3" fill="#424242"/><rect x="111.9" y="246.34" width="14" height="3" fill="#424242"/><rect x="111.9" y="210.97" width="14" height="3" fill="#424242"/><rect x="111.9" y="175.60" width="14" height="3" fill="#424242"/><rect x="111.9" y="670.80" width="992.80" height="3" fill="#424242"/><rect x="155.10" y="672.30" width="3" height="15" fill="#424242"/><rect x="277.40" y="672.30" width="3" height="15" fill="#424242"/><rect x="399.70" y="672.30" width="3" height="15" fill="#424242"/><rect x="522.00" y="672.30" width="3" height="15" fill="#424242"/><rect x="644.30" y="672.30" width="3" height="15" fill="#424242"/><rect x="766.60" y="672.30" width="3" height="15" fill="#424242"/><rect x="888.90" y="672.30" width="3" height="15" fill="#424242"/><rect x="1011.20" y="672.30" width="3" height="15" fill="#424242"/></svg>
<div style="position:absolute;left:1298.8px;top:1052.3px;width:1181.0px;height:750.0px;background:#ffffff;box-shadow:0 1px 4px rgba(0,0,0,0.16),0 4px 14px rgba(0,0,0,0.13)"></div>
<div style="position:absolute;left:1300.8px;top:1153.3px;width:1177.0px;height:1.6px;background:#ebebeb"></div>
<div style="position:absolute;left:1324.4px;top:1086.9px;font:700 35.5px/35.5px 'Liberation Sans', sans-serif;color:#2a2a2a;white-space:nowrap;transform:scaleX(0.9186);transform-origin:0 0;">Process Chamber Relative Pressure</div>
<div style="position:absolute;left:2046.2px;top:1086.9px;font:400 35.5px/35.5px 'Liberation Sans', sans-serif;color:#333333;white-space:nowrap;transform:scaleX(0.9866);transform-origin:0 0;">1.32 mbar</div>
<svg style="position:absolute;left:2310.8px;top:1099.3px;" width="38.0" height="15.0" viewBox="0 0 38 15"><circle cx="6" cy="7.5" r="2.6" fill="#333"/><circle cx="19" cy="7.5" r="2.6" fill="#333"/><circle cx="32" cy="7.5" r="2.6" fill="#333"/></svg>
<svg style="position:absolute;left:2410.8px;top:1090.8px;" width="34.0" height="32.0" viewBox="0 0 34 32"><path d="M4.8 3.5 L28.9 27.2 M28.9 3.5 L4.8 27.2" stroke="#222" stroke-width="3.7"/></svg>
<div style="position:absolute;left:1353.7px;top:1711.9px;font:400 24.7px/24.7px 'Liberation Sans', sans-serif;color:#4a4a4a;white-space:nowrap;">−1.0</div>
<div style="position:absolute;left:1353.7px;top:1662.4px;font:400 24.7px/24.7px 'Liberation Sans', sans-serif;color:#4a4a4a;white-space:nowrap;">−0.5</div>
<div style="position:absolute;left:1368.1px;top:1612.9px;font:400 24.7px/24.7px 'Liberation Sans', sans-serif;color:#4a4a4a;white-space:nowrap;">0.0</div>
<div style="position:absolute;left:1368.1px;top:1563.3px;font:400 24.7px/24.7px 'Liberation Sans', sans-serif;color:#4a4a4a;white-space:nowrap;">0.5</div>
<div style="position:absolute;left:1368.1px;top:1513.8px;font:400 24.7px/24.7px 'Liberation Sans', sans-serif;color:#4a4a4a;white-space:nowrap;">1.0</div>
<div style="position:absolute;left:1368.1px;top:1464.3px;font:400 24.7px/24.7px 'Liberation Sans', sans-serif;color:#4a4a4a;white-space:nowrap;">1.5</div>
<div style="position:absolute;left:1368.1px;top:1414.8px;font:400 24.7px/24.7px 'Liberation Sans', sans-serif;color:#4a4a4a;white-space:nowrap;">2.0</div>
<div style="position:absolute;left:1368.1px;top:1365.3px;font:400 24.7px/24.7px 'Liberation Sans', sans-serif;color:#4a4a4a;white-space:nowrap;">2.5</div>
<div style="position:absolute;left:1368.1px;top:1315.7px;font:400 24.7px/24.7px 'Liberation Sans', sans-serif;color:#4a4a4a;white-space:nowrap;">3.0</div>
<div style="position:absolute;left:1368.1px;top:1266.2px;font:400 24.7px/24.7px 'Liberation Sans', sans-serif;color:#4a4a4a;white-space:nowrap;">3.5</div>
<div style="position:absolute;left:1368.1px;top:1216.7px;font:400 24.7px/24.7px 'Liberation Sans', sans-serif;color:#4a4a4a;white-space:nowrap;">4.0</div>
<div style="position:absolute;left:1421.0px;top:1744.3px;font:400 24.2px/24.2px 'Liberation Sans', sans-serif;color:#4a4a4a;white-space:nowrap;">04 PM</div>
<div style="position:absolute;left:1547.7px;top:1744.3px;font:400 24.2px/24.2px 'Liberation Sans', sans-serif;color:#4a4a4a;white-space:nowrap;">04:15</div>
<div style="position:absolute;left:1670.0px;top:1744.3px;font:400 24.2px/24.2px 'Liberation Sans', sans-serif;color:#4a4a4a;white-space:nowrap;">04:30</div>
<div style="position:absolute;left:1792.3px;top:1744.3px;font:400 24.2px/24.2px 'Liberation Sans', sans-serif;color:#4a4a4a;white-space:nowrap;">04:45</div>
<div style="position:absolute;left:1910.2px;top:1744.3px;font:400 24.2px/24.2px 'Liberation Sans', sans-serif;color:#4a4a4a;white-space:nowrap;">05 PM</div>
<div style="position:absolute;left:2036.9px;top:1744.3px;font:400 24.2px/24.2px 'Liberation Sans', sans-serif;color:#4a4a4a;white-space:nowrap;">05:15</div>
<div style="position:absolute;left:2159.2px;top:1744.3px;font:400 24.2px/24.2px 'Liberation Sans', sans-serif;color:#4a4a4a;white-space:nowrap;">05:30</div>
<div style="position:absolute;left:2281.5px;top:1744.3px;font:400 24.2px/24.2px 'Liberation Sans', sans-serif;color:#4a4a4a;white-space:nowrap;">05:45</div>
<svg style="position:absolute;left:1298.8px;top:1052.3px;overflow:visible" width="1181.0" height="750.0" viewBox="0 0 1181 750"><rect x="125.9" y="177.10" width="978.80" height="99.04" fill="#fef4f4"/><rect x="125.9" y="573.26" width="978.80" height="99.04" fill="#fef4f4"/><line x1="121.2" y1="276.14" x2="1104.7" y2="276.14" stroke="#d8404a" stroke-width="3.2" stroke-dasharray="10 9.8"/><line x1="121.2" y1="573.26" x2="1104.7" y2="573.26" stroke="#d8404a" stroke-width="3.2" stroke-dasharray="10 9.8"/><path d="M125.9 444.51 H127.7 H127.70 V446.49 V387.06 H128.60 V434.60 H129.65 V424.70 H130.44 V440.55 H131.52 V440.55 H132.21 V424.70 H132.95 V428.66 H134.15 V424.70 H135.71 V432.62 H136.94 V414.80 H137.60 V414.80 H139.08 V414.80 H140.45 V414.80 H141.49 V428.66 H142.61 V424.70 H143.07 V428.66 H144.05 V436.58 H145.44 V450.45 H147.23 V450.45 H148.68 V448.47 H150.19 V448.47 H151.14 V442.53 H152.41 V448.47 H153.50 V448.47 H154.56 V448.47 H156.18 V448.47 H157.03 V448.47 H158.20 V448.47 H159.27 V444.51 H160.00 V448.47 H160.40 V446.49 V387.06 H161.30 V434.60 H161.99 V430.64 H162.60 V430.64 H163.96 V424.70 H164.69 V424.70 H165.31 V424.70 H166.70 V432.62 H167.98 V424.70 H169.03 V414.80 H170.62 V414.80 H171.64 V414.80 H172.35 V432.62 H173.94 V432.62 H174.81 V424.70 H175.77 V428.66 H176.75 V436.58 H177.57 V448.47 H178.94 V442.53 H179.60 V448.47 H180.45 V448.47 H181.06 V448.47 H182.06 V442.53 H183.12 V448.47 H183.83 V448.47 H185.19 V442.53 H186.51 V448.47 H187.86 V448.47 H189.61 V448.47 H191.21 V450.45 H192.70 V448.47 H193.10 V446.49 V395.98 H194.00 V434.60 H195.42 V424.70 H196.74 V424.70 H198.08 V424.70 H199.37 V424.70 H200.85 V432.62 H201.87 V414.80 H202.58 V414.80 H203.42 V418.76 H204.28 V432.62 H205.17 V432.62 H206.70 V424.70 H207.43 V424.70 H208.47 V432.62 H209.45 V436.58 H210.30 V448.47 H211.80 V448.47 H212.73 V448.47 H213.63 V450.45 H214.44 V448.47 H215.67 V448.47 H216.38 V448.47 H218.05 V448.47 H219.44 V448.47 H220.67 V444.51 H221.98 V448.47 H223.15 V448.47 H224.59 V448.47 H225.21 V448.47 H225.40 V444.51 H225.80 V446.49 V394.99 H226.70 V434.60 H228.30 V424.70 H229.35 V436.58 H230.69 V428.66 H232.08 V424.70 H233.03 V418.76 H234.54 V424.70 H236.08 V424.70 H237.54 V424.70 H238.77 V424.70 H239.75 V432.62 H240.96 V424.70 H241.17 V424.70 H242.15 V436.58 H243.81 V448.47 H244.80 V444.51 H246.23 V444.51 H247.36 V450.45 H248.06 V442.53 H248.70 V442.53 H249.41 V442.53 H250.28 V448.47 H251.02 V444.51 H252.41 V442.53 H253.32 V450.45 H254.36 V448.47 H255.77 V448.47 H256.99 V448.47 H258.10 V448.47 H258.50 V446.49 V387.06 H259.40 V434.60 H260.40 V430.64 H261.20 V430.64 H262.61 V424.70 H264.09 V424.70 H264.91 V432.62 H265.72 V428.66 H266.81 V414.80 H268.12 V414.80 H269.55 V418.76 H270.60 V414.80 H272.12 V428.66 H273.11 V432.62 H273.87 V432.62 H274.85 V440.55 H275.54 V448.47 H276.47 V448.47 H277.12 V442.53 H278.06 V444.51 H279.03 V448.47 H279.65 V442.53 H280.74 V448.47 H281.37 V448.47 H282.25 V448.47 H283.81 V448.47 H284.55 V444.51 H285.91 V448.47 H287.27 V444.51 H289.02 V448.47 H289.86 V444.51 H290.77 V450.45 H290.80 V444.51 H291.20 V446.49 V394.99 H292.10 V434.60 H292.93 V424.70 H294.07 V430.64 H295.17 V440.55 H296.16 V424.70 H296.85 V424.70 H297.58 V432.62 H298.37 V432.62 H299.35 V414.80 H300.41 V418.76 H301.11 V414.80 H301.93 V414.80 H303.51 V424.70 H304.64 V428.66 H305.51 V428.66 H306.45 V424.70 H306.57 V424.70 H307.55 V440.55 H308.66 V442.53 H309.84 V448.47 H310.70 V448.47 H311.82 V448.47 H312.62 V448.47 H314.05 V448.47 H315.21 V448.47 H316.89 V442.53 H318.50 V442.53 H319.63 V444.51 H320.92 V450.45 H321.63 V444.51 H322.76 V448.47 H323.50 V442.53 H323.90 V446.49 V394.99 H324.80 V434.60 H325.91 V440.55 H326.77 V440.55 H328.33 V424.70 H329.23 V424.70 H330.80 V424.70 H331.97 V428.66 H332.98 V414.80 H334.09 V414.80 H334.71 V424.70 H335.83 V414.80 H336.97 V424.70 H338.06 V424.70 H338.73 V424.70 H339.27 V432.62 H340.25 V440.55 H341.15 V448.47 H341.90 V450.45 H343.58 V450.45 H344.81 V450.45 H345.64 V448.47 H346.27 V442.53 H347.03 V448.47 H347.67 V448.47 H348.54 V448.47 H349.49 V444.51 H350.51 V444.51 H351.71 V442.53 H353.19 V450.45 H354.81 V448.47 H355.71 V442.53 H356.20 V448.47 H356.60 V446.49 V394.99 H357.50 V434.60 H358.93 V424.70 H359.68 V440.55 H361.15 V424.70 H362.28 V424.70 H363.11 V424.70 H364.61 V428.66 H365.82 V428.66 H366.63 V414.80 H368.12 V414.80 H369.61 V424.70 H370.94 V424.70 H371.93 V428.66 H371.97 V432.62 H372.95 V440.55 H374.50 V442.53 H375.34 V448.47 H376.76 V444.51 H377.48 V448.47 H378.90 V442.53 H379.63 V448.47 H381.00 V442.53 H382.20 V448.47 H383.80 V444.51 H384.98 V448.47 H385.62 V448.47 H386.96 V442.53 H388.14 V442.53 H388.90 V448.47 H389.30 V446.49 V394.99 H390.20 V434.60 H391.73 V430.64 H392.91 V436.58 H394.46 V424.70 H395.14 V432.62 H396.06 V424.70 H397.09 V424.70 H398.12 V418.76 H398.73 V418.76 H400.18 V414.80 H401.18 V414.80 H402.52 V428.66 H404.05 V432.62 H404.67 V424.70 H405.65 V436.58 H407.32 V448.47 H408.97 V444.51 H410.70 V444.51 H412.02 V442.53 H413.32 V442.53 H414.89 V448.47 H415.82 V448.47 H417.32 V448.47 H418.89 V448.47 H419.65 V450.45 H421.31 V448.47 H421.60 V444.51 H422.00 V446.49 V394.99 H422.90 V434.60 H424.22 V424.70 H425.62 V436.58 H426.69 V428.66 H428.18 V424.70 H429.01 V424.70 H429.95 V428.66 H431.12 V424.70 H432.11 V414.80 H433.35 V424.70 H434.71 V424.70 H435.42 V424.70 H436.76 V424.70 H437.37 V428.66 H438.35 V436.58 H439.73 V448.47 H440.45 V448.47 H441.38 V448.47 H442.64 V448.47 H443.74 V442.53 H445.02 V442.53 H446.38 V448.47 H447.07 V444.51 H448.48 V442.53 H449.54 V448.47 H450.60 V448.47 H452.23 V448.47 H453.56 V442.53 H454.30 V448.47 H454.70 V446.49 V394.99 H455.60 V434.60 H456.80 V424.70 H457.93 V430.64 H459.18 V424.70 H460.45 V428.66 H461.07 V428.66 H462.26 V424.70 H463.27 V414.80 H463.92 V424.70 H465.27 V418.76 H466.45 V414.80 H467.12 V428.66 H468.15 V424.70 H469.01 V432.62 H469.65 V424.70 H470.07 V424.70 H471.05 V440.55 H472.82 V448.47 H474.15 V448.47 H474.81 V448.47 H475.96 V450.45 H477.59 V448.47 H478.82 V448.47 H479.86 V448.47 H481.26 V448.47 H482.58 V450.45 H483.88 V444.51 H484.92 V450.45 H486.15 V444.51 H487.00 V448.47 H487.40 V446.49 V394.99 H488.30 V434.60 H489.40 V436.58 H490.79 V430.64 H491.66 V428.66 H492.90 V424.70 H493.68 V424.70 H494.79 V424.70 H496.27 V424.70 H497.49 V414.80 H498.37 V414.80 H498.99 V424.70 H499.69 V424.70 H500.37 V428.66 H501.88 V424.70 H502.77 V424.70 H503.75 V440.55 H504.92 V450.45 H505.93 V448.47 H507.42 V450.45 H508.99 V448.47 H510.56 V450.45 H512.16 V442.53 H513.30 V448.47 H514.21 V444.51 H515.25 V448.47 H516.85 V444.51 H517.84 V442.53 H519.35 V442.53 H519.70 V448.47 H520.10 V446.49 V394.99 H521.00 V434.60 H521.68 V430.64 H522.71 V436.58 H523.80 V440.55 H524.69 V432.62 H525.37 V424.70 H526.88 V424.70 H528.18 V424.70 H529.50 V424.70 H530.38 V418.76 H531.20 V414.80 H532.17 V428.66 H533.09 V424.70 H534.26 V432.62 H535.30 V428.66 H535.47 V428.66 H536.45 V436.58 H538.21 V450.45 H539.88 V444.51 H540.59 V448.47 H541.22 V448.47 H542.29 V444.51 H543.85 V450.45 H545.12 V444.51 H546.37 V450.45 H547.65 V442.53 H548.35 V448.47 H550.01 V450.45 H551.58 V448.47 H552.40 V448.47 H552.80 V446.49 V394.99 H553.70 V434.60 H554.95 V436.58 H555.62 V424.70 H556.52 V440.55 H557.46 V424.70 H558.79 V428.66 H559.48 V428.66 H560.17 V424.70 H561.02 V424.70 H562.11 V414.80 H563.47 V418.76 H564.42 V424.70 H565.70 V418.76 H566.78 V432.62 H568.09 V424.70 H568.17 V424.70 H569.15 V440.55 H570.72 V448.47 H572.38 V448.47 H573.75 V442.53 H574.79 V442.53 H576.35 V448.47 H578.06 V450.45 H578.95 V448.47 H580.74 V448.47 H582.16 V450.45 H583.01 V448.47 H584.24 V450.45 H585.10 V448.47 H585.50 V446.49 V394.99 H586.40 V434.60 H587.30 V436.58 H588.68 V424.70 H590.19 V424.70 H590.81 V432.62 H592.32 V432.62 H593.23 V414.80 H594.02 V414.80 H595.20 V414.80 H596.40 V424.70 H597.44 V424.70 H598.44 V428.66 H599.67 V428.66 H601.12 V432.62 H602.61 V432.62 H603.87 V428.66 H604.40 V424.70 V449.96 H1104.7" fill="none" stroke="#6a9fae" stroke-width="3.4" stroke-linejoin="miter"/><rect x="111.9" y="670.80" width="14" height="3" fill="#424242"/><rect x="111.9" y="621.28" width="14" height="3" fill="#424242"/><rect x="111.9" y="571.76" width="14" height="3" fill="#424242"/><rect x="111.9" y="522.24" width="14" height="3" fill="#424242"/><rect x="111.9" y="472.72" width="14" height="3" fill="#424242"/><rect x="111.9" y="423.20" width="14" height="3" fill="#424242"/><rect x="111.9" y="373.68" width="14" height="3" fill="#424242"/><rect x="111.9" y="324.16" width="14" height="3" fill="#424242"/><rect x="111.9" y="274.64" width="14" height="3" fill="#424242"/><rect x="111.9" y="225.12" width="14" height="3" fill="#424242"/><rect x="111.9" y="175.60" width="14" height="3" fill="#424242"/><rect x="111.9" y="670.80" width="992.80" height="3" fill="#424242"/><rect x="155.10" y="672.30" width="3" height="15" fill="#424242"/><rect x="277.40" y="672.30" width="3" height="15" fill="#424242"/><rect x="399.70" y="672.30" width="3" height="15" fill="#424242"/><rect x="522.00" y="672.30" width="3" height="15" fill="#424242"/><rect x="644.30" y="672.30" width="3" height="15" fill="#424242"/><rect x="766.60" y="672.30" width="3" height="15" fill="#424242"/><rect x="888.90" y="672.30" width="3" height="15" fill="#424242"/><rect x="1011.20" y="672.30" width="3" height="15" fill="#424242"/></svg>
<div style="position:absolute;left:67.0px;top:1854.0px;width:1181.0px;height:750.0px;background:#ffffff;box-shadow:0 1px 4px rgba(0,0,0,0.16),0 4px 14px rgba(0,0,0,0.13)"></div>
<div style="position:absolute;left:69.0px;top:1955.0px;width:1177.0px;height:1.6px;background:#ebebeb"></div>
<div style="position:absolute;left:92.5px;top:1888.6px;font:700 35.5px/35.5px 'Liberation Sans', sans-serif;color:#2a2a2a;white-space:nowrap;transform:scaleX(0.9256);transform-origin:0 0;">Process Chamber Temperature</div>
<div style="position:absolute;left:814.5px;top:1888.6px;font:400 35.5px/35.5px 'Liberation Sans', sans-serif;color:#333333;white-space:nowrap;transform:scaleX(0.9585);transform-origin:0 0;">158.974 °C</div>
<svg style="position:absolute;left:1079.0px;top:1901.0px;" width="38.0" height="15.0" viewBox="0 0 38 15"><circle cx="6" cy="7.5" r="2.6" fill="#333"/><circle cx="19" cy="7.5" r="2.6" fill="#333"/><circle cx="32" cy="7.5" r="2.6" fill="#333"/></svg>
<svg style="position:absolute;left:1179.0px;top:1892.5px;" width="34.0" height="32.0" viewBox="0 0 34 32"><path d="M4.8 3.5 L28.9 27.2 M28.9 3.5 L4.8 27.2" stroke="#222" stroke-width="3.7"/></svg>
<div style="position:absolute;left:131.3px;top:2478.2px;font:400 24.7px/24.7px 'Liberation Sans', sans-serif;color:#4a4a4a;white-space:nowrap;">110</div>
<div style="position:absolute;left:129.4px;top:2442.8px;font:400 24.7px/24.7px 'Liberation Sans', sans-serif;color:#4a4a4a;white-space:nowrap;">120</div>
<div style="position:absolute;left:129.4px;top:2407.5px;font:400 24.7px/24.7px 'Liberation Sans', sans-serif;color:#4a4a4a;white-space:nowrap;">130</div>
<div style="position:absolute;left:129.4px;top:2372.1px;font:400 24.7px/24.7px 'Liberation Sans', sans-serif;color:#4a4a4a;white-space:nowrap;">140</div>
<div style="position:absolute;left:129.4px;top:2336.7px;font:400 24.7px/24.7px 'Liberation Sans', sans-serif;color:#4a4a4a;white-space:nowrap;">150</div>
<div style="position:absolute;left:129.4px;top:2301.4px;font:400 24.7px/24.7px 'Liberation Sans', sans-serif;color:#4a4a4a;white-space:nowrap;">160</div>
<div style="position:absolute;left:129.4px;top:2266.0px;font:400 24.7px/24.7px 'Liberation Sans', sans-serif;color:#4a4a4a;white-space:nowrap;">170</div>
<div style="position:absolute;left:129.4px;top:2230.6px;font:400 24.7px/24.7px 'Liberation Sans', sans-serif;color:#4a4a4a;white-space:nowrap;">180</div>
<div style="position:absolute;left:129.4px;top:2195.2px;font:400 24.7px/24.7px 'Liberation Sans', sans-serif;color:#4a4a4a;white-space:nowrap;">190</div>
<div style="position:absolute;left:129.4px;top:2159.9px;font:400 24.7px/24.7px 'Liberation Sans', sans-serif;color:#4a4a4a;white-space:nowrap;">200</div>
<div style="position:absolute;left:129.4px;top:2124.5px;font:400 24.7px/24.7px 'Liberation Sans', sans-serif;color:#4a4a4a;white-space:nowrap;">210</div>
<div style="position:absolute;left:129.4px;top:2089.1px;font:400 24.7px/24.7px 'Liberation Sans', sans-serif;color:#4a4a4a;white-space:nowrap;">220</div>
<div style="position:absolute;left:129.4px;top:2053.8px;font:400 24.7px/24.7px 'Liberation Sans', sans-serif;color:#4a4a4a;white-space:nowrap;">230</div>
<div style="position:absolute;left:129.4px;top:2018.4px;font:400 24.7px/24.7px 'Liberation Sans', sans-serif;color:#4a4a4a;white-space:nowrap;">240</div>
<svg style="position:absolute;left:67.0px;top:1854.0px;overflow:visible" width="1181.0" height="750.0" viewBox="0 0 1181 750"><rect x="125.9" y="177.10" width="978.80" height="70.74" fill="#fef4f4"/><rect x="125.9" y="601.56" width="978.80" height="70.74" fill="#fef4f4"/><line x1="121.2" y1="247.84" x2="1104.7" y2="247.84" stroke="#d8404a" stroke-width="3.2" stroke-dasharray="10 9.8"/><line x1="121.2" y1="601.56" x2="1104.7" y2="601.56" stroke="#d8404a" stroke-width="3.2" stroke-dasharray="10 9.8"/><path d="M125.9 465.73 L127.0 465.02 V500.39 V457.24 L128.5 466.44 L130.9 464.60 L133.3 462.77 L135.7 461.11 L138.1 459.21 L140.5 458.18 L142.9 456.20 L143.4 465.02 V506.05 V457.24 L144.9 466.44 L147.3 466.07 L149.7 463.46 L152.1 460.74 L154.5 459.94 L156.9 457.78 L159.3 458.20 L159.8 465.02 V498.98 V457.24 L161.3 466.44 L163.7 464.98 L166.1 464.00 L168.5 461.73 L170.9 460.12 L173.3 459.98 L175.7 457.94 L176.2 465.02 V513.48 V457.24 L177.7 466.44 L180.1 465.45 L182.5 462.34 L184.9 461.18 L187.3 461.15 L189.7 458.04 L192.1 458.14 L192.6 465.02 V498.98 V457.24 L194.1 466.44 L196.5 464.61 L198.9 464.30 L201.3 463.07 L203.7 459.39 L206.1 459.49 L208.5 457.95 L209.0 465.02 V509.59 V457.24 L210.5 466.44 L212.9 463.71 L215.3 462.45 L217.7 462.36 L220.1 459.16 L222.5 458.68 L224.9 456.80 L225.4 465.02 V479.17 V457.24 L226.9 466.44 L229.3 465.64 L231.7 462.28 L234.1 461.37 L236.5 459.15 L238.9 457.80 L241.3 457.74 L241.8 465.02 V483.77 V457.24 L243.3 466.44 L245.7 465.25 L248.1 464.20 L250.5 462.72 L252.9 461.38 L255.3 459.27 L257.7 456.99 L258.2 465.02 V483.77 V457.24 L259.7 466.44 L262.1 466.14 L264.5 462.93 L266.9 462.24 L269.3 460.78 L271.7 457.99 L274.1 457.29 L274.6 465.02 V506.05 V457.24 L276.1 466.44 L278.5 465.36 L280.9 463.42 L283.3 461.33 L285.7 461.40 L288.1 457.60 L290.5 458.42 L291.0 465.02 V483.77 V457.24 L292.5 466.44 L294.9 464.29 L297.3 462.52 L299.7 463.03 L302.1 459.59 L304.5 459.11 L306.9 457.05 L307.4 465.02 V471.39 V457.24 L308.9 466.44 L311.3 466.12 L313.7 464.50 L316.1 462.63 L318.5 459.18 L320.9 459.53 L323.3 456.61 L323.8 465.02 V471.39 V457.24 L325.3 466.44 L327.7 463.84 L330.1 462.28 L332.5 462.23 L334.9 460.67 L337.3 458.71 L339.7 456.56 L340.2 465.02 V471.39 V457.24 L341.7 466.44 L344.1 465.88 L346.5 462.76 L348.9 461.10 L351.3 459.42 L353.7 459.92 L356.1 456.14 L356.6 465.02 V471.39 V457.24 L358.1 466.44 L360.5 465.92 L362.9 463.77 L365.3 461.57 L367.7 459.27 L370.1 459.17 L372.5 456.19 L373.0 465.02 V483.06 V457.24 L374.5 466.44 L376.9 464.79 L379.3 463.84 L381.7 462.29 L384.1 461.11 L386.5 459.82 L388.9 458.11 L389.4 465.02 V477.76 V457.24 L390.9 466.44 L393.3 464.44 L395.7 462.14 L398.1 462.68 L400.5 461.43 L402.9 457.57 L405.3 457.16 L405.8 465.02 V483.06 V457.24 L407.3 466.44 L409.7 465.14 L412.1 464.02 L414.5 461.61 L416.9 459.50 L419.3 458.88 L421.7 457.44 L422.2 465.02 V468.91 V457.24 L423.7 466.44 L426.1 466.01 L428.5 462.34 L430.9 463.00 L433.3 460.32 L435.7 457.94 L438.1 458.16 L438.6 465.02 V502.52 V457.24 L440.1 466.44 L442.5 464.33 L444.9 462.26 L447.3 461.52 L449.7 459.59 L452.1 459.75 L454.5 457.40 L455.0 465.02 V498.98 V457.24 L456.5 466.44 L458.9 465.77 L461.3 462.52 L463.7 462.35 L466.1 460.42 L468.5 457.54 L470.9 456.37 L471.4 465.02 V498.98 V457.24 L472.9 466.44 L475.3 463.73 L477.7 463.49 L480.1 461.87 L482.5 459.74 L484.9 458.83 L487.3 457.76 L487.8 465.02 V493.67 V457.24 L489.3 466.44 L491.7 465.14 L494.1 464.25 L496.5 462.14 L498.9 459.10 L501.3 457.64 L503.7 456.93 L504.2 465.02 V491.91 V457.24 L505.7 466.44 L508.1 464.91 L510.5 463.77 L512.9 462.86 L515.3 460.87 L517.7 458.08 L520.1 456.33 L520.6 465.02 V495.44 V457.24 L522.1 466.44 L524.5 465.25 L526.9 462.66 L529.3 461.16 L531.7 459.83 L534.1 458.37 L536.5 456.60 L537.0 465.02 V495.44 V457.24 L538.5 466.44 L540.9 465.24 L543.3 462.87 L545.7 462.38 L548.1 460.34 L550.5 458.11 L552.9 456.77 L553.4 465.02 V488.37 V457.24 L554.9 466.44 L557.3 465.42 L559.7 462.27 L562.1 461.47 L564.5 460.11 L566.9 459.98 L569.3 457.13 L569.8 465.02 V488.37 V457.24 L571.3 466.44 L573.7 465.52 L576.1 462.95 L578.5 461.93 L580.9 459.52 L583.3 458.41 L585.7 456.50 L586.2 465.02 V498.98 V457.24 L587.7 466.44 L590.1 465.28 L592.5 463.02 L594.9 461.25 L597.3 459.49 L599.7 459.15 L602.1 456.39 L602.6 465.02 V468.91 V457.24 L604.2 458.66 L605.0 466.08 L1104.7 466.26" fill="none" stroke="#6a9fae" stroke-width="3.4" stroke-linejoin="miter"/><rect x="111.9" y="670.80" width="14" height="3" fill="#424242"/><rect x="111.9" y="635.43" width="14" height="3" fill="#424242"/><rect x="111.9" y="600.06" width="14" height="3" fill="#424242"/><rect x="111.9" y="564.69" width="14" height="3" fill="#424242"/><rect x="111.9" y="529.31" width="14" height="3" fill="#424242"/><rect x="111.9" y="493.94" width="14" height="3" fill="#424242"/><rect x="111.9" y="458.57" width="14" height="3" fill="#424242"/><rect x="111.9" y="423.20" width="14" height="3" fill="#424242"/><rect x="111.9" y="387.83" width="14" height="3" fill="#424242"/><rect x="111.9" y="352.46" width="14" height="3" fill="#424242"/><rect x="111.9" y="317.09" width="14" height="3" fill="#424242"/><rect x="111.9" y="281.71" width="14" height="3" fill="#424242"/><rect x="111.9" y="246.34" width="14" height="3" fill="#424242"/><rect x="111.9" y="210.97" width="14" height="3" fill="#424242"/><rect x="111.9" y="175.60" width="14" height="3" fill="#424242"/><rect x="111.9" y="670.80" width="992.80" height="3" fill="#424242"/><rect x="155.10" y="672.30" width="3" height="15" fill="#424242"/><rect x="277.40" y="672.30" width="3" height="15" fill="#424242"/><rect x="399.70" y="672.30" width="3" height="15" fill="#424242"/><rect x="522.00" y="672.30" width="3" height="15" fill="#424242"/><rect x="644.30" y="672.30" width="3" height="15" fill="#424242"/><rect x="766.60" y="672.30" width="3" height="15" fill="#424242"/><rect x="888.90" y="672.30" width="3" height="15" fill="#424242"/><rect x="1011.20" y="672.30" width="3" height="15" fill="#424242"/></svg>
<div style="position:absolute;left:1298.8px;top:1854.0px;width:1181.0px;height:750.0px;background:#ffffff;box-shadow:0 1px 4px rgba(0,0,0,0.16),0 4px 14px rgba(0,0,0,0.13)"></div>
<div style="position:absolute;left:1300.8px;top:1955.0px;width:1177.0px;height:1.6px;background:#ebebeb"></div>
<div style="position:absolute;left:1324.4px;top:1888.6px;font:700 35.5px/35.5px 'Liberation Sans', sans-serif;color:#2a2a2a;white-space:nowrap;transform:scaleX(0.9113);transform-origin:0 0;">Process Chamber Top Oxygen</div>
<div style="position:absolute;left:2047.3px;top:1888.6px;font:400 35.5px/35.5px 'Liberation Sans', sans-serif;color:#333333;white-space:nowrap;transform:scaleX(0.9277);transform-origin:0 0;">0.732 %</div>
<svg style="position:absolute;left:2310.8px;top:1901.0px;" width="38.0" height="15.0" viewBox="0 0 38 15"><circle cx="6" cy="7.5" r="2.6" fill="#333"/><circle cx="19" cy="7.5" r="2.6" fill="#333"/><circle cx="32" cy="7.5" r="2.6" fill="#333"/></svg>
<svg style="position:absolute;left:2410.8px;top:1892.5px;" width="34.0" height="32.0" viewBox="0 0 34 32"><path d="M4.8 3.5 L28.9 27.2 M28.9 3.5 L4.8 27.2" stroke="#222" stroke-width="3.7"/></svg>
<div style="position:absolute;left:1374.3px;top:2472.3px;font:400 24.7px/24.7px 'Liberation Sans', sans-serif;color:#4a4a4a;white-space:nowrap;">−1</div>
<div style="position:absolute;left:1388.7px;top:2431.1px;font:400 24.7px/24.7px 'Liberation Sans', sans-serif;color:#4a4a4a;white-space:nowrap;">0</div>
<div style="position:absolute;left:1388.7px;top:2389.8px;font:400 24.7px/24.7px 'Liberation Sans', sans-serif;color:#4a4a4a;white-space:nowrap;">1</div>
<div style="position:absolute;left:1388.7px;top:2348.5px;font:400 24.7px/24.7px 'Liberation Sans', sans-serif;color:#4a4a4a;white-space:nowrap;">2</div>
<div style="position:absolute;left:1388.7px;top:2307.3px;font:400 24.7px/24.7px 'Liberation Sans', sans-serif;color:#4a4a4a;white-space:nowrap;">3</div>
<div style="position:absolute;left:1388.7px;top:2266.0px;font:400 24.7px/24.7px 'Liberation Sans', sans-serif;color:#4a4a4a;white-space:nowrap;">4</div>
<div style="position:absolute;left:1388.7px;top:2224.7px;font:400 24.7px/24.7px 'Liberation Sans', sans-serif;color:#4a4a4a;white-space:nowrap;">5</div>
<div style="position:absolute;left:1388.7px;top:2183.5px;font:400 24.7px/24.7px 'Liberation Sans', sans-serif;color:#4a4a4a;white-space:nowrap;">6</div>
<div style="position:absolute;left:1388.7px;top:2142.2px;font:400 24.7px/24.7px 'Liberation Sans', sans-serif;color:#4a4a4a;white-space:nowrap;">7</div>
<div style="position:absolute;left:1388.7px;top:2100.9px;font:400 24.7px/24.7px 'Liberation Sans', sans-serif;color:#4a4a4a;white-space:nowrap;">8</div>
<div style="position:absolute;left:1388.7px;top:2059.7px;font:400 24.7px/24.7px 'Liberation Sans', sans-serif;color:#4a4a4a;white-space:nowrap;">9</div>
<div style="position:absolute;left:1375.0px;top:2018.4px;font:400 24.7px/24.7px 'Liberation Sans', sans-serif;color:#4a4a4a;white-space:nowrap;">10</div>
<svg style="position:absolute;left:1298.8px;top:1854.0px;overflow:visible" width="1181.0" height="750.0" viewBox="0 0 1181 750"><rect x="125.9" y="177.10" width="978.80" height="82.53" fill="#fef4f4"/><rect x="125.9" y="589.77" width="978.80" height="82.53" fill="#fef4f4"/><line x1="121.2" y1="259.63" x2="1104.7" y2="259.63" stroke="#d8404a" stroke-width="3.2" stroke-dasharray="10 9.8"/><line x1="121.2" y1="589.77" x2="1104.7" y2="589.77" stroke="#d8404a" stroke-width="3.2" stroke-dasharray="10 9.8"/><path d="M125.9 557.64 L129.9 557.45 L133.9 556.98 L137.9 557.70 L141.9 556.96 L145.9 557.58 L149.9 557.53 L153.9 557.54 L157.9 558.29 L161.9 557.67 L165.9 558.05 L169.9 558.32 L173.9 557.13 L177.9 558.07 L181.9 557.62 L185.9 557.24 L189.9 557.49 L193.9 557.84 L197.9 557.55 L201.9 557.50 L205.9 557.16 L209.9 558.16 L213.9 557.49 L217.9 557.95 L221.9 557.91 L225.9 557.17 L229.9 557.57 L233.9 557.49 L237.9 557.19 L241.9 556.97 L245.9 557.66 L249.9 557.41 L253.9 557.57 L257.9 557.56 L261.9 557.29 L265.9 557.65 L269.9 557.53 L273.9 557.61 L277.9 556.92 L281.9 557.28 L285.9 557.02 L289.9 556.92 L293.9 557.94 L297.9 557.49 L301.9 556.92 L305.9 557.07 L309.9 558.12 L313.9 558.14 L317.9 557.66 L321.9 558.21 L325.9 557.96 L329.9 558.21 L333.9 557.33 L337.9 557.16 L341.9 556.99 L345.9 558.09 L349.9 557.26 L353.9 557.34 L357.9 558.11 L361.9 557.01 L365.9 556.88 L369.9 558.00 L373.9 556.91 L377.9 557.73 L381.9 557.60 L385.9 556.85 L389.9 557.08 L393.9 558.08 L397.9 557.68 L401.9 557.56 L405.9 557.82 L409.9 558.03 L413.9 557.85 L417.9 557.25 L421.9 558.29 L425.9 557.50 L429.9 557.67 L433.9 558.29 L437.9 557.83 L441.9 557.39 L445.9 557.56 L449.9 558.23 L453.9 556.86 L457.9 557.15 L461.9 556.88 L465.9 558.17 L469.9 557.93 L473.9 558.26 L477.9 557.16 L481.9 557.92 L485.9 558.13 L489.9 557.69 L493.9 556.97 L497.9 557.10 L501.9 557.94 L505.9 558.10 L509.9 556.96 L513.9 557.47 L517.9 557.28 L521.9 558.19 L525.9 558.24 L529.9 557.30 L533.9 557.69 L537.9 558.21 L541.9 556.93 L545.9 557.38 L549.9 557.13 L553.9 558.20 L557.9 557.05 L561.9 558.22 L565.9 557.04 L569.9 557.65 L573.9 557.82 L577.9 557.50 L581.9 556.94 L585.9 557.92 L589.9 558.13 L593.9 557.54 L597.9 557.97 L601.9 558.16 L605.9 558.08 L609.9 558.82 L613.9 558.82 L617.9 558.82 L621.9 558.82 L625.9 558.82 L629.9 558.82 L633.9 558.82 L637.9 558.82 L641.9 558.82 L645.9 558.82 L649.9 558.82 L653.9 558.82 L657.9 558.82 L661.9 558.82 L665.9 558.82 L669.9 558.82 L673.9 558.82 L677.9 558.82 L681.9 558.82 L685.9 558.82 L689.9 558.82 L693.9 558.82 L697.9 558.82 L701.9 558.82 L705.9 558.82 L709.9 558.82 L713.9 558.82 L717.9 558.82 L721.9 558.82 L725.9 558.82 L729.9 558.82 L733.9 558.82 L737.9 558.82 L741.9 558.82 L745.9 558.82 L749.9 558.82 L753.9 558.82 L757.9 558.82 L761.9 558.82 L765.9 558.82 L769.9 558.82 L773.9 558.82 L777.9 558.82 L781.9 558.82 L785.9 558.82 L789.9 558.82 L793.9 558.82 L797.9 558.82 L801.9 558.82 L805.9 558.82 L809.9 558.82 L813.9 558.82 L817.9 558.82 L821.9 558.82 L825.9 558.82 L829.9 558.82 L833.9 558.82 L837.9 558.82 L841.9 558.82 L845.9 558.82 L849.9 558.82 L853.9 558.82 L857.9 558.82 L861.9 558.82 L865.9 558.82 L869.9 558.82 L873.9 558.82 L877.9 558.82 L881.9 558.82 L885.9 558.82 L889.9 558.82 L893.9 558.82 L897.9 558.82 L901.9 558.82 L905.9 558.82 L909.9 558.82 L913.9 558.82 L917.9 558.82 L921.9 558.82 L925.9 558.82 L929.9 558.82 L933.9 558.82 L937.9 558.82 L941.9 558.82 L945.9 558.82 L949.9 558.82 L953.9 558.82 L957.9 558.82 L961.9 558.82 L965.9 558.82 L969.9 558.82 L973.9 558.82 L977.9 558.82 L981.9 558.82 L985.9 558.82 L989.9 558.82 L993.9 558.82 L997.9 558.82 L1001.9 558.82 L1005.9 558.82 L1009.9 558.82 L1013.9 558.82 L1017.9 558.82 L1021.9 558.82 L1025.9 558.82 L1029.9 558.82 L1033.9 558.82 L1037.9 558.82 L1041.9 558.82 L1045.9 558.82 L1049.9 558.82 L1053.9 558.82 L1057.9 558.82 L1061.9 558.82 L1065.9 558.82 L1069.9 558.82 L1073.9 558.82 L1077.9 558.82 L1081.9 558.82 L1085.9 558.82 L1089.9 558.82 L1093.9 558.82 L1097.9 558.82 L1101.9 558.82" fill="none" stroke="#6a9fae" stroke-width="3.4" stroke-linejoin="miter"/><rect x="111.9" y="670.80" width="14" height="3" fill="#424242"/><rect x="111.9" y="629.53" width="14" height="3" fill="#424242"/><rect x="111.9" y="588.27" width="14" height="3" fill="#424242"/><rect x="111.9" y="547.00" width="14" height="3" fill="#424242"/><rect x="111.9" y="505.73" width="14" height="3" fill="#424242"/><rect x="111.9" y="464.47" width="14" height="3" fill="#424242"/><rect x="111.9" y="423.20" width="14" height="3" fill="#424242"/><rect x="111.9" y="381.93" width="14" height="3" fill="#424242"/><rect x="111.9" y="340.67" width="14" height="3" fill="#424242"/><rect x="111.9" y="299.40" width="14" height="3" fill="#424242"/><rect x="111.9" y="258.13" width="14" height="3" fill="#424242"/><rect x="111.9" y="216.87" width="14" height="3" fill="#424242"/><rect x="111.9" y="175.60" width="14" height="3" fill="#424242"/><rect x="111.9" y="670.80" width="992.80" height="3" fill="#424242"/><rect x="155.10" y="672.30" width="3" height="15" fill="#424242"/><rect x="277.40" y="672.30" width="3" height="15" fill="#424242"/><rect x="399.70" y="672.30" width="3" height="15" fill="#424242"/><rect x="522.00" y="672.30" width="3" height="15" fill="#424242"/><rect x="644.30" y="672.30" width="3" height="15" fill="#424242"/><rect x="766.60" y="672.30" width="3" height="15" fill="#424242"/><rect x="888.90" y="672.30" width="3" height="15" fill="#424242"/><rect x="1011.20" y="672.30" width="3" height="15" fill="#424242"/></svg>
<div style="position:absolute;left:3262.0px;top:1025.0px;width:42.0px;height:1452.0px;background:#f1f1f1"></div>
<svg style="position:absolute;left:3272.0px;top:1040.0px;" width="24.0" height="15.0" viewBox="0 0 24 15"><path d="M2 13 H21 L11.5 2.3 Z" fill="#a3a3a3"/></svg>
<div style="position:absolute;left:3266.0px;top:1067.6px;width:34.8px;height:1242.4px;background:#c1c1c1"></div>
<svg style="position:absolute;left:3272.0px;top:2450.0px;" width="24.0" height="15.0" viewBox="0 0 24 15"><path d="M2 2 H21 L11.5 12.7 Z" fill="#505050"/></svg>
<div style="position:absolute;left:0.0px;top:0.0px;width:2.2px;height:2479.0px;background:#5a5c5f"></div>
<div style="position:absolute;left:0.0px;top:2477.3px;width:3304.0px;height:1.7px;background:#55575a"></div></body></html>
